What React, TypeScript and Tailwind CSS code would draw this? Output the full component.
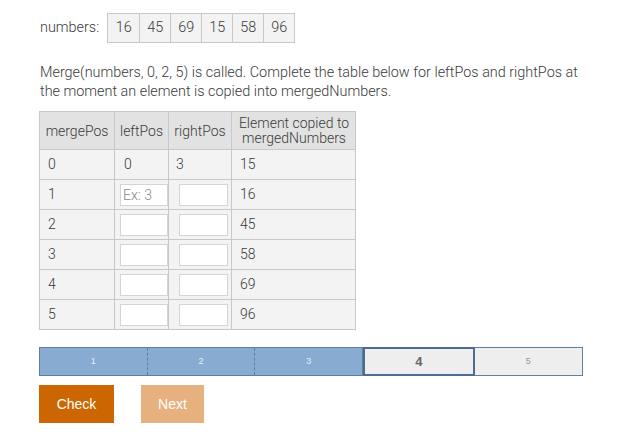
import React from "react";

const numbers = [16, 45, 69, 15, 58, 96];

const rows = [
  { merge: 0, left: "0", right: "3", copied: 15, fixed: true },
  { merge: 1, left: "", right: "", copied: 16, placeholder: "Ex: 3" },
  { merge: 2, left: "", right: "", copied: 45 },
  { merge: 3, left: "", right: "", copied: 58 },
  { merge: 4, left: "", right: "", copied: 69 },
  { merge: 5, left: "", right: "", copied: 96 },
];

const td = "border border-[#c8c8c8] text-left align-middle p-0";
const th = "border border-[#c8c8c8] text-center align-middle p-0 font-light";

export default function App() {
  return (
    <div className="min-h-screen bg-white font-['Roboto',sans-serif] font-light text-[14.4px] text-[#3a3a3a] pl-[39px] pr-[54px] pt-[13px]">
      <div className="flex items-center">
        <span className="mr-[8px] pl-[1px]">numbers:</span>
        <div className="flex border border-[#c8c8c8] bg-[#f3f3f3]">
          {numbers.map((n, i) => (
            <div
              key={i}
              className={`h-[28px] w-[31px] flex items-center justify-center ${i > 0 ? "border-l border-[#c8c8c8]" : ""}`}
            >
              {n}
            </div>
          ))}
        </div>
      </div>

      <p className="mt-[20px] leading-[19px] pl-[1px] w-[560px]">
        Merge(numbers, 0, 2, 5) is called. Complete the table below for leftPos and rightPos at the moment an element is copied into mergedNumbers.
      </p>

      <table className="mt-[10px] border-collapse bg-[#f3f3f3] table-fixed w-[316px] text-[14px]">
        <colgroup>
          <col className="w-[75px]" />
          <col className="w-[54px]" />
          <col className="w-[63px]" />
          <col className="w-[124px]" />
        </colgroup>
        <thead>
          <tr className="bg-[#e2e2e2] h-[38px]">
            <th className={`${th} pt-[2px]`}>mergePos</th>
            <th className={`${th} pt-[2px]`}>leftPos</th>
            <th className={`${th} pt-[2px]`}>rightPos</th>
            <th className={`${th} leading-[15px] pl-[1px] pt-[1px]`}>
              <div>Element copied to</div>
              <div>mergedNumbers</div>
            </th>
          </tr>
        </thead>
        <tbody>
          {rows.map((r) => (
            <tr key={r.merge} className="h-[30px]">
              <td className={`${td} pl-[8px]`}>{r.merge}</td>
              <td className={`${td} pl-[5px]`}>
                {r.fixed ? (
                  <span className="pl-[4px]">{r.left}</span>
                ) : (
                  <input
                    className="block w-[48px] h-[22px] bg-white border border-[#cfd6dc] px-[2px] text-[14px] font-light outline-none placeholder:text-[#888]"
                    placeholder={r.placeholder}
                  />
                )}
              </td>
              <td className={`${td} pl-[10px]`}>
                {r.fixed ? (
                  <span className="-ml-[3px]">{r.right}</span>
                ) : (
                  <input className="block w-[49px] h-[22px] bg-white border border-[#cfd6dc] px-[2px] text-[14px] font-light outline-none" />
                )}
              </td>
              <td className={`${td} pl-[8px]`}>{r.copied}</td>
            </tr>
          ))}
        </tbody>
      </table>

      <div className="mt-[17px] flex h-[29px] w-[544px] font-['Liberation_Sans',sans-serif] font-normal">
        <div className="flex flex-[3] bg-[#87abd1] border border-[#5b7fa3]">
          {[1, 2, 3].map((n, i) => (
            <div
              key={n}
              className={`flex-1 flex items-center justify-center text-[9px] text-[#e8eef6] ${i > 0 ? "border-l border-dashed border-[#5b7fa3]" : ""}`}
            >
              {n}
            </div>
          ))}
        </div>
        <div className="flex-1 bg-[#eeeeee] border-2 border-[#4f6a8f] flex items-center justify-center text-[13px] font-bold text-[#666]">
          4
        </div>
        <div className="flex-1 bg-[#eeeeee] border border-l-0 border-[#5b7fa3] flex items-center justify-center text-[9px] text-[#999]">
          5
        </div>
      </div>

      <div className="mt-[9px] flex gap-[27px] font-['Liberation_Sans',sans-serif]">
        <button className="h-[38px] w-[75px] bg-[#cc6600] text-white text-[14px]">Check</button>
        <button className="h-[38px] w-[63px] bg-[#e6b17f] text-white text-[14px]">Next</button>
      </div>
    </div>
  );
}
